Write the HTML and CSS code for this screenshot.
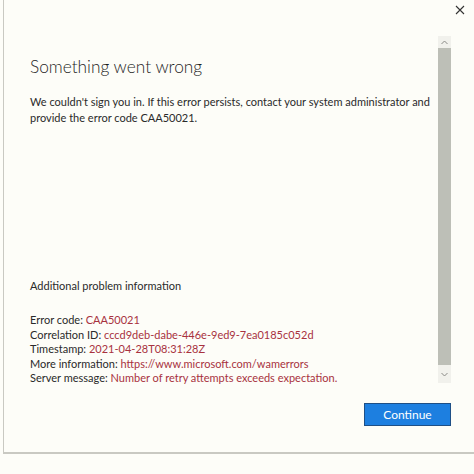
FILE: index.html
```html
<!DOCTYPE html>
<html>
<head>
<meta charset="utf-8">
<link rel="stylesheet" href="styles.css">
</head>
<body>
<div class="window">
  <div class="titlebar">
    <svg class="close" width="10" height="10" viewBox="0 0 10 10"><path d="M1 1L9 9M9 1L1 9" stroke="#333" stroke-width="1.1" fill="none"/></svg>
  </div>
  <div class="main">
    <div class="content">
      <h1 class="title">Something went wrong</h1>
      <p class="desc">We couldn't sign you in. If this error persists, contact your system administrator and provide the error code CAA50021.</p>
      <p class="section">Additional problem information</p>
      <div class="details">
        <div>Error code: <span class="val">CAA50021</span></div>
        <div>Correlation ID: <span class="val">cccd9deb-dabe-446e-9ed9-7ea0185c052d</span></div>
        <div>Timestamp: <span class="val">2021-04-28T08:31:28Z</span></div>
        <div>More information: <span class="val">https://www.microsoft.com/wamerrors</span></div>
        <div>Server message: <span class="val">Number of retry attempts exceeds expectation.</span></div>
      </div>
    </div>
    <div class="scrollbar">
      <div class="arrow"><svg width="7" height="5" viewBox="0 0 7 5"><path d="M0.5 4L3.5 1L6.5 4" stroke="#8a8a86" stroke-width="1" fill="none"/></svg></div>
      <div class="thumb"></div>
      <div class="arrow"><svg width="7" height="5" viewBox="0 0 7 5"><path d="M0.5 1L3.5 4L6.5 1" stroke="#8a8a86" stroke-width="1" fill="none"/></svg></div>
    </div>
  </div>
  <div class="footer">
    <button class="btn">Continue</button>
  </div>
</div>
</body>
</html>
```
FILE: styles.css
```css
* { box-sizing: border-box; }
html, body { margin: 0; padding: 0; background: #fdfdf8; }
body { width: 474px; height: 474px; overflow: hidden; font-family: Lato, "Noto Sans", sans-serif; color: #2a2a2a; }
.window {
  margin-left: 3px;
  height: 454px;
  border-left: 1px solid #c9c9c2;
  border-bottom: 2px solid #c9c9c2;
  display: flex;
  flex-direction: column;
}
.titlebar {
  height: 36px;
  display: flex;
  justify-content: flex-end;
  align-items: flex-start;
  padding: 5px 9px 0 0;
}
.main {
  display: flex;
  height: 347px;
}
.content {
  flex: 1;
  padding-left: 26px;
  min-width: 0;
}
.title {
  margin: 19px 0 0;
  font-size: 17.3px;
  font-weight: 300;
  line-height: 24px;
  color: #1f1f1f;
}
.desc {
  margin: 15px 0 0;
  font-size: 11px;
  line-height: 16px;
}
.section {
  margin: 152px 0 0;
  font-size: 11px;
  line-height: 16px;
}
.details {
  margin-top: 19px;
  font-size: 11px;
  line-height: 14.6px;
}
.val { color: #a8323e; }
.scrollbar {
  width: 13px;
  margin-right: 23px;
  display: flex;
  flex-direction: column;
  background: #f6f6f1;
}
.arrow {
  height: 12px;
  display: flex;
  align-items: center;
  justify-content: center;
  background: #f1f1ec;
}
.arrow:last-child { height: 18px; }
.thumb {
  flex: 1;
  background: #bdbfb7;
}
.footer {
  display: flex;
  justify-content: flex-end;
  padding: 20px 23px 0 0;
}
.btn {
  width: 87px;
  height: 23px;
  background: #1d7fe0;
  border: 1px solid #1e4f86;
  color: #fff;
  font-family: Lato, "Noto Sans", sans-serif;
  font-size: 12px;
  padding: 0;
  line-height: 20px;
}
```
